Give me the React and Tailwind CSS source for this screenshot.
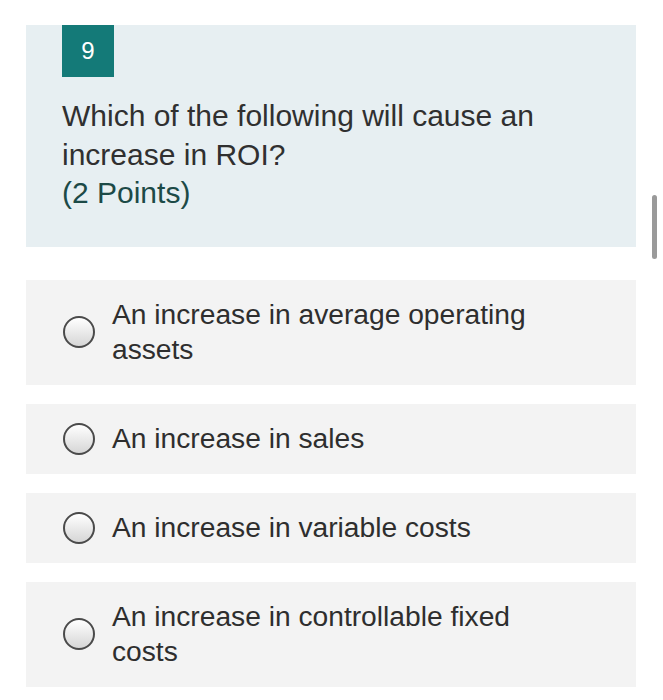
const options = [
  "An increase in average operating assets",
  "An increase in sales",
  "An increase in variable costs",
  "An increase in controllable fixed costs",
];

const Radio = () => (
  <span className="block w-[32px] h-[32px] shrink-0 rounded-full border-2 border-[#4a4a4a] bg-gradient-to-b from-white to-[#d6d6d6]"></span>
);

export default function App() {
  return (
    <div
      className="relative w-[663px] h-[700px] bg-white overflow-hidden"
      style={{ fontFamily: '"Liberation Sans", Arial, sans-serif' }}
    >
      <div className="pt-[25px] pl-[26px] w-[636px] flex flex-col">
        <div className="bg-[#e7eff2] px-[36px] pb-[34px]">
          <div className="w-[52px] h-[52px] bg-[#147a78] flex items-center justify-center text-white text-[24px]">
            9
          </div>
          <div className="mt-[20px] text-[30px] leading-[38.5px] text-[#303030]">
            <p className="w-[500px]">Which of the following will cause an increase in ROI?</p>
            <p className="text-[#1c4a47]">(2 Points)</p>
          </div>
        </div>

        <div className="mt-[33px] flex flex-col gap-[19px]">
          {options.map((opt, i) => (
            <div key={i} className="bg-[#f3f3f3] flex items-center py-[17.5px] pl-[37px]">
              <div className="flex items-center gap-[17px]">
                <Radio />
                <span className="w-[445px] text-[28.2px] leading-[35px] text-[#2e2e2e]">{opt}</span>
              </div>
            </div>
          ))}
        </div>
      </div>
      <div className="absolute left-[652px] top-[195px] w-[5px] h-[64px] rounded-full bg-[#9a9a9a]"></div>
    </div>
  );
}
